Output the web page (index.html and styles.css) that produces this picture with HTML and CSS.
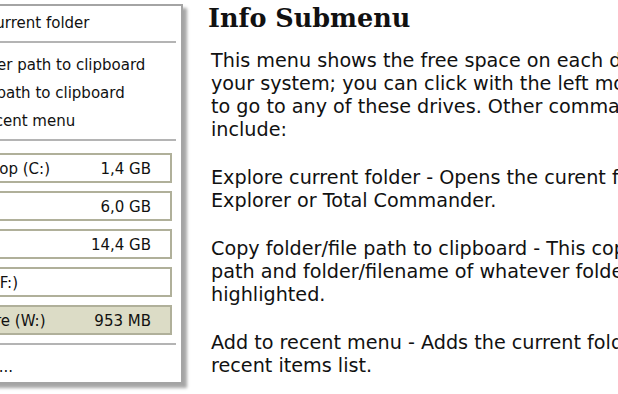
FILE: index.html
```html
<!DOCTYPE html>
<html lang="en">
<head>
    <meta charset="UTF-8">
    <meta name="viewport" content="width=device-width, initial-scale=1.0">
    <title>Info Submenu</title>
    <link rel="stylesheet" href="styles.css">
</head>
<body>
    <div class="page">
        <div class="menu">
            <div class="menu-item">Explore current folder</div>
            <div class="menu-sep"></div>
            <div class="menu-item">Copy folder path to clipboard</div>
            <div class="menu-item">Copy file path to clipboard</div>
            <div class="menu-item">Add to recent menu</div>
            <div class="menu-sep"></div>
            <div class="drives">
                <div class="drive"><span class="drive-name">Workshop (C:)</span><span class="drive-free">1,4 GB</span></div>
                <div class="drive"><span class="drive-name">CD (D:)</span><span class="drive-free">6,0 GB</span></div>
                <div class="drive"><span class="drive-name">Zip (E:)</span><span class="drive-free">14,4 GB</span></div>
                <div class="drive"><span class="drive-name">Media (F:)</span><span class="drive-free"></span></div>
                <div class="drive active"><span class="drive-name">Software (W:)</span><span class="drive-free">953 MB</span></div>
            </div>
            <div class="menu-sep"></div>
            <div class="menu-item last">Configure...</div>
        </div>

        <div class="content">
            <h1>Info Submenu</h1>
            <p>This menu shows the free space on each drive on<br>
               your system; you can click with the left mouse button<br>
               to go to any of these drives. Other commands<br>
               include:</p>
            <p>Explore current folder - Opens the curent folder in<br>
               Explorer or Total Commander.</p>
            <p>Copy folder/file path to clipboard - This copies the<br>
               path and folder/filename of whatever folder/file is<br>
               highlighted.</p>
            <p>Add to recent menu - Adds the current folder to the<br>
               recent items list.</p>
        </div>
    </div>
</body>
</html>
```

FILE: styles.css
```css
/* page */
body { margin: 0; background: #fff; overflow: hidden; }
.page { display: flex; align-items: flex-start; width: 1000px; }

/* popup menu, cut off at the left edge */
.menu {
    flex: none;
    width: 249px;
    height: 374px;
    margin: 4px 0 0 -70px;
    padding-top: 2px;
    border: 2px solid #a4a4a4;
    background: #fff;
    box-shadow: 4px 4px 3px rgba(0, 0, 0, 0.35);
    font: 16.7px "DejaVu Sans Condensed", "DejaVu Sans", sans-serif;
    color: #111;
}
.menu-item { height: 28px; line-height: 28px; margin-left: -6px; white-space: nowrap; }
.menu-item.last { margin-top: 6px; }
.menu-sep { height: 2px; background: #b4b4b4; margin: 5px 5px 7px 0; }
.drives { padding: 5px 9px 0 0; }
.drive {
    display: flex;
    justify-content: space-between;
    align-items: center;
    height: 26px;
    margin-bottom: 8px;
    padding: 0 19px 0 10px;
    border: 2px solid #b0b09a;
    white-space: nowrap;
}
.drive.active { background: #dcdcc6; }

/* help text */
.content {
    flex: none;
    padding-left: 28px;
    font: 19.2px/23px "DejaVu Sans", Verdana, sans-serif;
    color: #111;
    white-space: nowrap;
}
.content h1 {
    margin: 1px 0 0 -3px;
    font: bold 25.5px/34px "DejaVu Serif", Georgia, serif;
}
.content p { margin: 14px 0 25px; }
```
